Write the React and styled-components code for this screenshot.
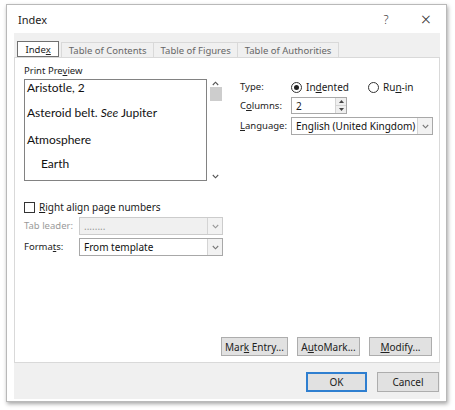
import React from "react";
import styled, { createGlobalStyle } from "styled-components";

const Global = createGlobalStyle`
  html, body { margin: 0; padding: 0; background: #ffffff; }
  body { font-family: "Noto Sans", "Open Sans", sans-serif; font-size: 10px; color: #1a1a1a; }
  * { box-sizing: border-box; }
`;

const Page = styled.div`
  width: 455px;
  height: 410px;
  padding: 4px 8px 8px 6px;
`;

const Dialog = styled.div`
  width: 441px;
  height: 398px;
  background: #ffffff;
  border: 1px solid #b9b9b9;
  box-shadow: 1px 2px 4px rgba(0, 0, 0, 0.35);
  display: flex;
  flex-direction: column;
`;

const TitleBar = styled.div`
  height: 28px;
  display: flex;
  align-items: center;
  padding: 0 0 0 11px;
  font-size: 11px;
  color: #222;
`;

const Title = styled.div`
  flex: 1;
`;

const TitleButton = styled.div`
  width: 40px;
  text-align: center;
  font-size: ${(p) => p.$size || 12}px;
  font-weight: 300;
  color: #333;
`;

const Body = styled.div`
  flex: 1;
  margin: 0 6px 2px 7px;
  background: #f0f0f0;
  display: flex;
  flex-direction: column;
`;

const TabStrip = styled.div`
  display: flex;
  align-items: flex-end;
  padding: 8px 0 0 3px;
  height: 24px;
`;

const Tab = styled.div`
  height: ${(p) => (p.$active ? 16 : 15)}px;
  padding: 0 ${(p) => (p.$active ? 7.5 : 6.5)}px;
  display: flex;
  align-items: center;
  font-size: 9.5px;
  color: ${(p) => (p.$active ? "#222" : "#666")};
  background: ${(p) => (p.$active ? "#ffffff" : "#f0f0f0")};
  border: 1px solid ${(p) => (p.$active ? "#707070" : "#d9d9d9")};
  border-bottom: ${(p) => (p.$active ? "1px solid #707070" : "none")};
  margin-right: ${(p) => (p.$active ? 3 : 0)}px;
  margin-left: ${(p) => (p.$first ? 0 : -1)}px;
  position: relative;
  z-index: ${(p) => (p.$active ? 1 : 0)};
`;

const Panel = styled.div`
  height: 306px;
  background: #ffffff;
  border: 1px solid #d9d9d9;
  display: flex;
  flex-direction: column;
  padding: 7px 7px 6px 9px;
`;

const Columns = styled.div`
  display: flex;
  gap: 17px;
`;

const LeftCol = styled.div`
  width: 199px;
  display: flex;
  flex-direction: column;
`;

const RightCol = styled.div`
  flex: 1;
  padding-top: 15px;
  display: flex;
  flex-direction: column;
  gap: 3px;
`;

const SmallLabel = styled.div`
  font-size: 9.5px;
  color: ${(p) => (p.$disabled ? "#9a9a9a" : "#222")};
  line-height: 12px;
  width: ${(p) => p.$w || "auto"};
  flex-shrink: 0;
`;

const PreviewRow = styled.div`
  display: flex;
  margin-top: 2px;
  height: 102px;
`;

const PreviewBox = styled.div`
  width: 185px;
  border: 1px solid #828282;
  padding: 0 2px;
  font-family: "Lato", "Noto Sans", sans-serif;
  font-size: 12px;
  color: #111;
  overflow: hidden;
`;

const Entry = styled.div`
  height: ${(p) => p.$h}px;
  display: flex;
  align-items: flex-end;
  padding-left: ${(p) => (p.$indent ? 14 : 0)}px;
  padding-bottom: 3px;
  line-height: 14px;
`;

const Scrollbar = styled.div`
  width: 15px;
  margin-left: 1px;
  display: flex;
  flex-direction: column;
  align-items: center;
  padding: 2px 0;
`;

const Thumb = styled.div`
  width: 12px;
  height: 14px;
  background: #cdcdcd;
  margin-top: 1px;
`;

const Spacer = styled.div`
  flex: 1;
`;

const CheckRow = styled.div`
  display: flex;
  align-items: center;
  gap: 4px;
  margin-top: 19px;
  font-size: 10px;
`;

const Box = styled.div`
  width: 11px;
  height: 11px;
  border: 1px solid #333;
  background: #fff;
`;

const FieldRow = styled.div`
  display: flex;
  align-items: center;
  margin-top: ${(p) => p.$mt || 0}px;
`;

const Select = styled.div`
  width: ${(p) => p.$w}px;
  height: 18px;
  border: 1px solid ${(p) => (p.$disabled ? "#cccccc" : "#a8a8a8")};
  background: ${(p) => (p.$disabled ? "#f0f0f0" : "#ffffff")};
  display: flex;
  align-items: center;
  font-size: 10px;
  color: ${(p) => (p.$disabled ? "#9a9a9a" : "#111")};
`;

const SelectText = styled.div`
  flex: 1;
  padding-left: 4px;
  white-space: nowrap;
`;

const DropButton = styled.div`
  width: 15px;
  height: 100%;
  border-left: 1px solid #d4d4d4;
  background: #f2f2f2;
  display: flex;
  align-items: center;
  justify-content: center;
`;

const RadioGroup = styled.div`
  display: flex;
  align-items: center;
  gap: 4px;
  font-size: 10px;
  margin-right: ${(p) => p.$mr || 0}px;
`;

const RadioCircle = styled.div`
  width: 11px;
  height: 11px;
  border-radius: 50%;
  border: 1px solid #333;
  background: #fff;
  display: flex;
  align-items: center;
  justify-content: center;
  &::after {
    content: "";
    width: 5px;
    height: 5px;
    border-radius: 50%;
    background: ${(p) => (p.$on ? "#222" : "transparent")};
  }
`;

const Spin = styled.div`
  width: 56px;
  height: 17px;
  border: 1px solid #a8a8a8;
  display: flex;
  font-size: 10px;
`;

const SpinText = styled.div`
  flex: 1;
  padding-left: 4px;
  display: flex;
  align-items: center;
`;

const SpinButtons = styled.div`
  width: 11px;
  display: flex;
  flex-direction: column;
  border-left: 1px solid #d4d4d4;
  background: #efefef;
`;

const SpinHalf = styled.div`
  flex: 1;
  display: flex;
  align-items: center;
  justify-content: center;
  border-top: ${(p) => (p.$bottom ? "1px solid #d4d4d4" : "none")};
`;

const ActionRow = styled.div`
  display: flex;
  justify-content: flex-end;
  gap: 9px;
`;

const Button = styled.div`
  width: ${(p) => p.$w}px;
  height: ${(p) => p.$h || 19}px;
  background: #e1e1e1;
  border: ${(p) => (p.$default ? "2px solid #2f7fd0" : "1px solid #adadad")};
  display: flex;
  align-items: center;
  justify-content: center;
  font-size: 10px;
  color: #222;
`;

const Footer = styled.div`
  flex: 1;
  display: flex;
  justify-content: flex-end;
  align-items: flex-start;
  gap: 10px;
  padding: 9px 1px 0 0;
`;

const U = styled.span`
  text-decoration: underline;
  text-underline-offset: 1px;
`;

const Chevron = ({ up, color = "#555" }) => (
  <svg width="7" height="5" viewBox="0 0 7 5">
    <path
      d={up ? "M0.8 4 L3.5 1.2 L6.2 4" : "M0.8 1 L3.5 3.8 L6.2 1"}
      fill="none"
      stroke={color}
      strokeWidth="1.1"
    />
  </svg>
);

const Tri = ({ up }) => (
  <svg width="5" height="3" viewBox="0 0 5 3">
    <path d={up ? "M0 3 L2.5 0 L5 3 Z" : "M0 0 L2.5 3 L5 0 Z"} fill="#444" />
  </svg>
);

export default function App() {
  return (
    <>
      <Global />
      <Page>
        <Dialog>
          <TitleBar>
            <Title>Index</Title>
            <TitleButton $size={12}>?</TitleButton>
            <TitleButton $size={18}>×</TitleButton>
          </TitleBar>
          <Body>
            <TabStrip>
              <Tab $active $first>
                Inde<U>x</U>
              </Tab>
              <Tab>Table of Contents</Tab>
              <Tab>Table of Figures</Tab>
              <Tab>Table of Authorities</Tab>
            </TabStrip>
            <Panel>
              <Columns>
                <LeftCol>
                  <SmallLabel>
                    Print Pre<U>v</U>iew
                  </SmallLabel>
                  <PreviewRow>
                    <PreviewBox>
                      <Entry $h={18}>Aristotle, 2</Entry>
                      <Entry $h={25}>
                        Asteroid belt.&nbsp;<i>See</i>&nbsp;Jupiter
                      </Entry>
                      <Entry $h={27}>Atmosphere</Entry>
                      <Entry $h={24} $indent>
                        Earth
                      </Entry>
                    </PreviewBox>
                    <Scrollbar>
                      <Chevron up />
                      <Thumb />
                      <Spacer />
                      <Chevron />
                    </Scrollbar>
                  </PreviewRow>
                  <CheckRow>
                    <Box />
                    <span>
                      <U>R</U>ight align page numbers
                    </span>
                  </CheckRow>
                  <FieldRow $mt={3}>
                    <SmallLabel $disabled $w="55px">
                      Tab leader:
                    </SmallLabel>
                    <Select $w={144} $disabled>
                      <SelectText>........</SelectText>
                      <DropButton>
                        <Chevron color="#999" />
                      </DropButton>
                    </Select>
                  </FieldRow>
                  <FieldRow $mt={3}>
                    <SmallLabel $w="55px">
                      Forma<U>t</U>s:
                    </SmallLabel>
                    <Select $w={144}>
                      <SelectText>From template</SelectText>
                      <DropButton>
                        <Chevron color="#777" />
                      </DropButton>
                    </Select>
                  </FieldRow>
                </LeftCol>
                <RightCol>
                  <FieldRow>
                    <SmallLabel $w="51px">Type:</SmallLabel>
                    <RadioGroup $mr={19}>
                      <RadioCircle $on />
                      <span>
                        In<U>d</U>ented
                      </span>
                    </RadioGroup>
                    <RadioGroup>
                      <RadioCircle />
                      <span>
                        Ru<U>n</U>-in
                      </span>
                    </RadioGroup>
                  </FieldRow>
                  <FieldRow>
                    <SmallLabel $w="51px">
                      C<U>o</U>lumns:
                    </SmallLabel>
                    <Spin>
                      <SpinText>2</SpinText>
                      <SpinButtons>
                        <SpinHalf>
                          <Tri up />
                        </SpinHalf>
                        <SpinHalf $bottom>
                          <Tri />
                        </SpinHalf>
                      </SpinButtons>
                    </Spin>
                  </FieldRow>
                  <FieldRow>
                    <SmallLabel $w="51px">
                      <U>L</U>anguage:
                    </SmallLabel>
                    <Select $w={142}>
                      <SelectText>English (United Kingdom)</SelectText>
                      <DropButton>
                        <Chevron color="#777" />
                      </DropButton>
                    </Select>
                  </FieldRow>
                </RightCol>
              </Columns>
              <Spacer />
              <ActionRow>
                <Button $w={67}>
                  Mar<U>k</U>&nbsp;Entry...
                </Button>
                <Button $w={63}>
                  A<U>u</U>toMark...
                </Button>
                <Button $w={63}>
                  <U>M</U>odify...
                </Button>
              </ActionRow>
            </Panel>
            <Footer>
              <Button $w={61} $h={20} $default>
                OK
              </Button>
              <Button $w={62} $h={20}>
                Cancel
              </Button>
            </Footer>
          </Body>
        </Dialog>
      </Page>
    </>
  );
}
